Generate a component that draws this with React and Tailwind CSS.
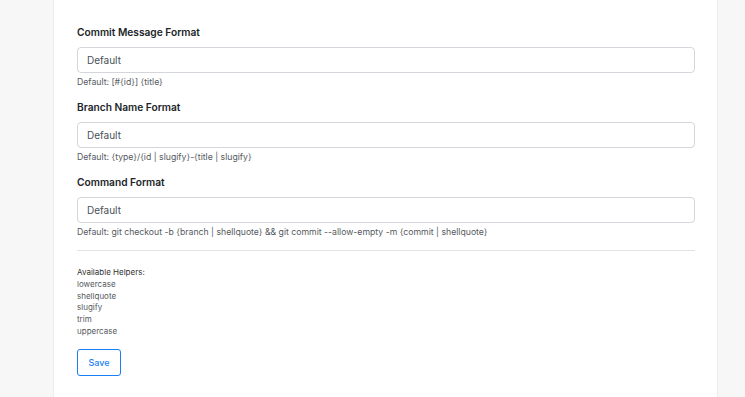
import React from "react";

const fields = [
  { label: "Commit Message Format", hint: "Default: [#{id}] {title}" },
  { label: "Branch Name Format", hint: "Default: {type}/{id | slugify}-{title | slugify}" },
  {
    label: "Command Format",
    hint: "Default: git checkout -b {branch | shellquote} && git commit --allow-empty -m {commit | shellquote}",
  },
];

const helpers = ["lowercase", "shellquote", "slugify", "trim", "uppercase"];

export default function App() {
  return (
    <div
      className="w-[745px] h-[397px] overflow-hidden bg-[#f7f7f7] flex"
      style={{ fontFamily: "Inter, 'Liberation Sans', Arial, sans-serif" }}
    >
      <div className="ml-[53px] w-[665px] h-full bg-white border-x border-[#ececec] pl-[23px] pr-[22px] pt-[25px]">
        {fields.map((f, i) => (
          <div key={i} className="mb-[13px]">
            <div className="text-[10.2px] font-semibold text-[#212529] leading-[14px]">{f.label}</div>
            <div className="mt-[8px] h-[26px] border border-[#d3d6da] rounded-[4px] flex items-center px-[9px] text-[10px] text-[#495057]">
              Default
            </div>
            <div className="mt-[4px] text-[8.7px] text-[#555a60] leading-[10px]">{f.hint}</div>
          </div>
        ))}
        <div className="border-t border-[#e3e3e3]" />
        <div className="mt-[16px] text-[8px] leading-[11.8px] text-[#555a60]">
          <div className="text-[#333]">Available Helpers:</div>
          {helpers.map((h) => (
            <div key={h}>{h}</div>
          ))}
        </div>
        <button className="mt-[11px] w-[44px] h-[27px] border border-[#1a7ef5] rounded-[3px] text-[#1a7ef5] text-[9px] font-medium bg-white">
          Save
        </button>
      </div>
    </div>
  );
}
